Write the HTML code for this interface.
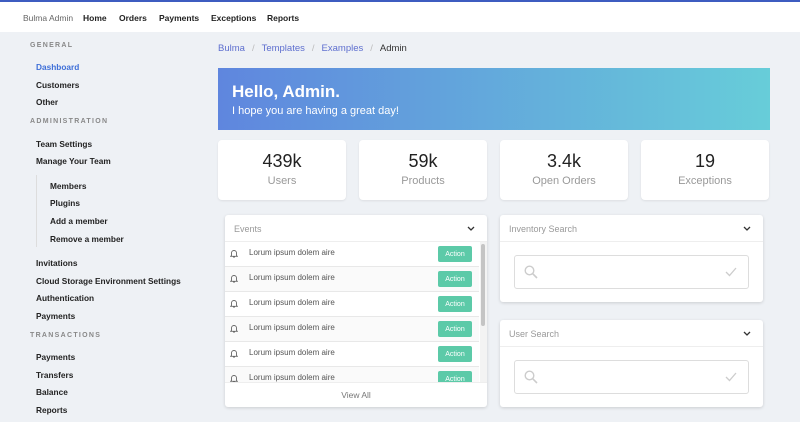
<!DOCTYPE html>
<html><head><style>
*{box-sizing:border-box;margin:0;padding:0}
body{width:800px;height:422px;overflow:hidden;background:#eef1f5;font-family:"Liberation Sans",sans-serif;position:relative}
.nav{position:absolute;top:0;left:0;width:800px;height:32px;background:#fff;border-top:2px solid #3e5cc0}
.nav span{position:absolute;top:11px;font-size:8.5px;font-weight:bold;color:#222}
.side div{position:absolute;font-size:8.3px;color:#222;font-weight:bold;white-space:nowrap}
.side .lbl{font-size:7px;color:#888;letter-spacing:1.3px;font-weight:bold}
.bc{position:absolute;top:43px;left:218px;font-size:9.5px;color:#5e6fcf}
.bc i{font-style:normal;color:#bbb;margin:0 7px}
.hero{position:absolute;left:218px;top:68px;width:552px;height:62px;background:linear-gradient(90deg,#5f86de,#67cdd9);color:#fff;padding:14px 14px}
.hero h1{font-size:17px;font-weight:bold}
.hero p{font-size:11px;margin-top:3px}
.stat{position:absolute;top:140px;width:128px;height:60px;background:#fff;border-radius:4px;text-align:center;padding-top:11px;box-shadow:0 1px 2px rgba(0,0,0,.08)}
.stat b{display:block;font-size:18px;font-weight:normal;color:#222}
.stat span{display:block;font-size:11px;color:#999;margin-top:3px}
.card{position:absolute;background:#fff;border-radius:3px;box-shadow:0 1px 3px rgba(0,0,0,.15);overflow:hidden}
.ch{height:27px;border-bottom:1px solid #eee;font-size:9px;color:#999;padding:9px 9px;position:relative}
.chev{position:absolute;right:12px;top:11px}
.row{position:absolute;left:0;width:254px;height:25px;border-bottom:1px solid #e8e8e8;font-size:8px;color:#555}
.row .t{position:absolute;left:24px;top:6px}
.row .a{position:absolute;left:213px;top:4px;width:34px;height:16px;background:#5ccaa8;color:#fff;font-size:7px;display:flex;align-items:center;justify-content:center;border-radius:2px}
.row svg{position:absolute;left:5px;top:7px}
.inp{position:absolute;top:40px;width:235px;height:34px;border:1px solid #ddd;border-radius:3px}
</style></head><body>
<div class="nav">
<span style="left:23px;font-weight:normal;color:#666">Bulma Admin</span>
<span style="left:83px">Home</span><span style="left:119px">Orders</span><span style="left:159px">Payments</span><span style="left:211px">Exceptions</span><span style="left:267px">Reports</span>
</div>
<div class="side">
<div class="lbl" style="left:30px;top:42px">GENERAL</div>
<div style="left:36px;top:62px;color:#3e6fd8">Dashboard</div>
<div style="left:36px;top:80px">Customers</div>
<div style="left:36px;top:97px">Other</div>
<div class="lbl" style="left:30px;top:118px">ADMINISTRATION</div>
<div style="left:36px;top:139px">Team Settings</div>
<div style="left:36px;top:156px">Manage Your Team</div>
<div style="left:36px;top:175px;width:1px;height:72px;background:#ddd"></div>
<div style="left:50px;top:181px">Members</div>
<div style="left:50px;top:198px">Plugins</div>
<div style="left:50px;top:216px">Add a member</div>
<div style="left:50px;top:234px">Remove a member</div>
<div style="left:36px;top:258px">Invitations</div>
<div style="left:36px;top:276px">Cloud Storage Environment Settings</div>
<div style="left:36px;top:293px">Authentication</div>
<div style="left:36px;top:311px">Payments</div>
<div class="lbl" style="left:30px;top:332px">TRANSACTIONS</div>
<div style="left:36px;top:352px">Payments</div>
<div style="left:36px;top:370px">Transfers</div>
<div style="left:36px;top:387px">Balance</div>
<div style="left:36px;top:405px">Reports</div>
</div>
<div class="bc">Bulma<i>/</i>Templates<i>/</i>Examples<i>/</i><span style="color:#333">Admin</span></div>
<div class="hero"><h1>Hello, Admin.</h1><p>I hope you are having a great day!</p></div>
<div class="stat" style="left:218px"><b>439k</b><span>Users</span></div>
<div class="stat" style="left:359px"><b>59k</b><span>Products</span></div>
<div class="stat" style="left:500px"><b>3.4k</b><span>Open Orders</span></div>
<div class="stat" style="left:641px"><b>19</b><span>Exceptions</span></div>
<div class="card" style="left:225px;top:215px;width:262px;height:192px">
<div class="ch">Events<svg class="chev" width="8" height="6" viewBox="0 0 8 6"><path d="M1 1l3 3 3-3" stroke="#333" stroke-width="1.3" fill="none"/></svg></div>
<div style="position:absolute;top:27px;left:0;width:262px;height:140px;overflow:hidden">
<div class="row" style="top:0"><svg width="8" height="9" viewBox="0 0 8 9"><path d="M1.5 6.5V4a2.5 2.5 0 015 0v2.5l.8.8H.7zM3 8h2" stroke="#666" fill="none" stroke-width=".9"/></svg><span class="t">Lorum ipsum dolem aire</span><span class="a">Action</span></div>
<div class="row" style="top:25px;background:#fafafa"><svg width="8" height="9" viewBox="0 0 8 9"><path d="M1.5 6.5V4a2.5 2.5 0 015 0v2.5l.8.8H.7zM3 8h2" stroke="#666" fill="none" stroke-width=".9"/></svg><span class="t">Lorum ipsum dolem aire</span><span class="a">Action</span></div>
<div class="row" style="top:50px"><svg width="8" height="9" viewBox="0 0 8 9"><path d="M1.5 6.5V4a2.5 2.5 0 015 0v2.5l.8.8H.7zM3 8h2" stroke="#666" fill="none" stroke-width=".9"/></svg><span class="t">Lorum ipsum dolem aire</span><span class="a">Action</span></div>
<div class="row" style="top:75px;background:#fafafa"><svg width="8" height="9" viewBox="0 0 8 9"><path d="M1.5 6.5V4a2.5 2.5 0 015 0v2.5l.8.8H.7zM3 8h2" stroke="#666" fill="none" stroke-width=".9"/></svg><span class="t">Lorum ipsum dolem aire</span><span class="a">Action</span></div>
<div class="row" style="top:100px"><svg width="8" height="9" viewBox="0 0 8 9"><path d="M1.5 6.5V4a2.5 2.5 0 015 0v2.5l.8.8H.7zM3 8h2" stroke="#666" fill="none" stroke-width=".9"/></svg><span class="t">Lorum ipsum dolem aire</span><span class="a">Action</span></div>
<div class="row" style="top:125px;background:#fafafa"><svg width="8" height="9" viewBox="0 0 8 9"><path d="M1.5 6.5V4a2.5 2.5 0 015 0v2.5l.8.8H.7zM3 8h2" stroke="#666" fill="none" stroke-width=".9"/></svg><span class="t">Lorum ipsum dolem aire</span><span class="a">Action</span></div>
<div style="position:absolute;left:255px;top:0;width:7px;height:140px;background:#f3f3f3"></div>
<div style="position:absolute;left:256px;top:2px;width:4px;height:82px;background:#c4c4c4;border-radius:2px"></div>
</div>
<div style="position:absolute;top:167px;left:0;width:262px;height:25px;border-top:1px solid #eee;text-align:center;font-size:8.5px;color:#777;line-height:24px">View All</div>
</div>
<div class="card" style="left:500px;top:215px;width:263px;height:87px">
<div class="ch">Inventory Search<svg class="chev" width="8" height="6" viewBox="0 0 8 6"><path d="M1 1l3 3 3-3" stroke="#333" stroke-width="1.3" fill="none"/></svg></div>
<div class="inp" style="left:14px"><svg style="position:absolute;left:9px;top:9px" width="14" height="14" viewBox="0 0 14 14"><circle cx="5.5" cy="5.5" r="4.3" stroke="#ccc" stroke-width="1.4" fill="none"/><path d="M8.7 8.7L13 13" stroke="#ccc" stroke-width="1.6"/></svg><svg style="position:absolute;right:11px;top:11px" width="12" height="10" viewBox="0 0 12 10"><path d="M1 5l3.5 3.5L11 1" stroke="#ccc" stroke-width="1.3" fill="none"/></svg></div>
</div>
<div class="card" style="left:500px;top:320px;width:263px;height:87px">
<div class="ch">User Search<svg class="chev" width="8" height="6" viewBox="0 0 8 6"><path d="M1 1l3 3 3-3" stroke="#333" stroke-width="1.3" fill="none"/></svg></div>
<div class="inp" style="left:14px"><svg style="position:absolute;left:9px;top:9px" width="14" height="14" viewBox="0 0 14 14"><circle cx="5.5" cy="5.5" r="4.3" stroke="#ccc" stroke-width="1.4" fill="none"/><path d="M8.7 8.7L13 13" stroke="#ccc" stroke-width="1.6"/></svg><svg style="position:absolute;right:11px;top:11px" width="12" height="10" viewBox="0 0 12 10"><path d="M1 5l3.5 3.5L11 1" stroke="#ccc" stroke-width="1.3" fill="none"/></svg></div>
</div>
</body></html>
